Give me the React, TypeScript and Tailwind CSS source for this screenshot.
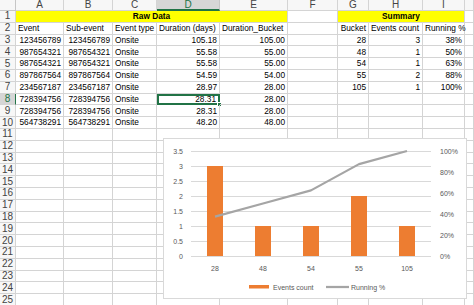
const cols = ['A', 'B', 'C', 'D', 'E', 'F', 'G', 'H', 'I', ''];

type Cell = { v: string; right?: boolean };

const events: [string, string, string, string, string][] = [
	['123456789', '123456789', 'Onsite', '105.18', '105.00'],
	['987654321', '987654321', 'Onsite', '55.58', '55.00'],
	['987654321', '987654321', 'Onsite', '55.58', '55.00'],
	['897867564', '897867564', 'Onsite', '54.59', '54.00'],
	['234567187', '234567187', 'Onsite', '28.97', '28.00'],
	['728394756', '728394756', 'Onsite', '28.31', '28.00'],
	['728394756', '728394756', 'Onsite', '28.31', '28.00'],
	['564738291', '564738291', 'Onsite', '48.20', '48.00'],
];

const summary: [string, string, string][] = [
	['28', '3', '38%'],
	['48', '1', '50%'],
	['54', '1', '63%'],
	['55', '2', '88%'],
	['105', '1', '100%'],
];

const buildRow = (r: number): Cell[] => {
	const empty = Array.from({ length: 10 }, () => ({ v: '' }));
	if (r === 2) {
		return [
			{ v: 'Event' },
			{ v: 'Sub-event' },
			{ v: 'Event type' },
			{ v: 'Duration (days)' },
			{ v: 'Duration_Bucket' },
			{ v: '' },
			{ v: 'Bucket', right: true },
			{ v: 'Events count' },
			{ v: 'Running %' },
			{ v: '' },
		];
	}
	const e = events[r - 3];
	const s = summary[r - 3];
	if (e) {
		empty[0] = { v: e[0], right: true };
		empty[1] = { v: e[1], right: true };
		empty[2] = { v: e[2] };
		empty[3] = { v: e[3], right: true };
		empty[4] = { v: e[4], right: true };
	}
	if (s) {
		empty[6] = { v: s[0], right: true };
		empty[7] = { v: s[1], right: true };
		empty[8] = { v: s[2], right: true };
	}
	return empty;
};

const RowHead = ({ n }: { n: number }) => (
	<div
		className={`flex items-center justify-center border-b border-r text-[10px] leading-none ${
			n === 8 ? 'border-r-[#217346] bg-[#d6d6d6] text-[#217346]' : 'border-[#d4d4d4] bg-[#f7f7f7] text-[#444]'
		} border-b-[#d4d4d4]`}
	>
		{n}
	</div>
);

const Chart = () => {
	const bars = [3, 1, 1, 2, 1];
	const labels = ['28', '48', '54', '55', '105'];
	const pct = [0.375, 0.5, 0.625, 0.875, 1];
	const xs = [51, 99, 147, 195, 243];
	const y = (v: number) => 117 - 30 * v;
	const yp = (p: number) => 117 - 105 * p;

	return (
		<div className="absolute left-[163px] top-[138px] h-[161px] w-[304px] border border-[#d9d9d9] bg-white">
			<svg width="304" height="161" className="block font-['Liberation_Sans',sans-serif]">
				{[0, 0.5, 1, 1.5, 2, 2.5, 3, 3.5].map((v) => (
					<g key={v}>
						<line x1="27" x2="267" y1={y(v) + 0.5} y2={y(v) + 0.5} stroke="#d9d9d9" strokeWidth="1" />
						<text x="19" y={y(v) + 2.5} fontSize="7" fill="#595959" textAnchor="end">
							{v}
						</text>
					</g>
				))}
				{[0, 0.2, 0.4, 0.6, 0.8, 1].map((p) => (
					<text key={p} x="276" y={yp(p) + 2.5} fontSize="7" fill="#595959">
						{Math.round(p * 100)}%
					</text>
				))}
				{bars.map((b, i) => (
					<rect key={i} x={xs[i] - 8} y={y(b)} width="16" height={30 * b} fill="#ed7d31" />
				))}
				<polyline
					points={pct.map((p, i) => `${xs[i]},${yp(p)}`).join(' ')}
					fill="none"
					stroke="#a5a5a5"
					strokeWidth="2.25"
					strokeLinejoin="round"
				/>
				{labels.map((l, i) => (
					<text key={l} x={xs[i]} y="132" fontSize="7" fill="#595959" textAnchor="middle">
						{l}
					</text>
				))}
				<rect x="85" y="146" width="20" height="3.5" fill="#ed7d31" />
				<text x="109" y="150.5" fontSize="7" fill="#595959">
					Events count
				</text>
				<line x1="162" x2="185" y1="148" y2="148" stroke="#a5a5a5" strokeWidth="2.25" />
				<text x="187" y="150.5" fontSize="7" fill="#595959">
					Running %
				</text>
			</svg>
		</div>
	);
};

const App = () => {
	const rows = Array.from({ length: 25 }, (_, i) => i + 1);

	return (
		<div className="relative h-[305px] w-[474px] overflow-hidden bg-white font-['Liberation_Sans',sans-serif] text-[8.3px] text-black">
			<div className="grid grid-cols-[16px_48px_49px_44px_63px_68px_50px_31px_54px_42px_1fr] auto-rows-[11.8px] grid-rows-[11px]">
				<div className="border-b border-r border-[#c6c6c6] bg-[#f7f7f7]" />
				{cols.map((c, i) => (
					<div
						key={i}
						className={`flex items-center justify-center border-b border-r text-[10px] leading-none ${
							c === 'D'
								? 'border-b-2 border-b-[#217346] border-r-[#c6c6c6] bg-[#d6d6d6] text-[#217346]'
								: 'border-[#d4d4d4] bg-[#f7f7f7] text-[#444]'
						}`}
					>
						{c}
					</div>
				))}

				{rows.map((r) => {
					if (r === 1) {
						return [
							<RowHead key="h1" n={1} />,
							<div
								key="raw"
								className="col-span-5 flex items-center justify-center border-b border-r border-[#d4d4d4] bg-[#ffff00] font-bold"
							>
								Raw Data
							</div>,
							<div key="f1" className="border-b border-r border-[#d4d4d4]" />,
							<div
								key="sum"
								className="col-span-3 flex items-center justify-center border-b border-r border-[#d4d4d4] bg-[#ffff00] font-bold"
							>
								Summary
							</div>,
							<div key="j1" className="border-b border-r border-[#d4d4d4]" />,
						];
					}
					const cells = buildRow(r);
					return [
						<RowHead key={`h${r}`} n={r} />,
						...cells.map((c, i) => {
							const selected = r === 8 && i === 3;
							return (
								<div
									key={`${r}-${i}`}
									className={`relative flex items-center overflow-visible whitespace-nowrap px-[2px] leading-none ${
										c.right ? 'justify-end' : 'justify-start'
									} ${selected ? 'border-2 border-[#217346]' : 'border-b border-r border-[#d4d4d4]'}`}
								>
									{c.v}
									{selected && (
										<span className="absolute -bottom-[4px] -right-[4px] h-[5px] w-[5px] border border-white bg-[#217346]" />
									)}
								</div>
							);
						}),
					];
				})}
			</div>
			<Chart />
		</div>
	);
};

export default App;
